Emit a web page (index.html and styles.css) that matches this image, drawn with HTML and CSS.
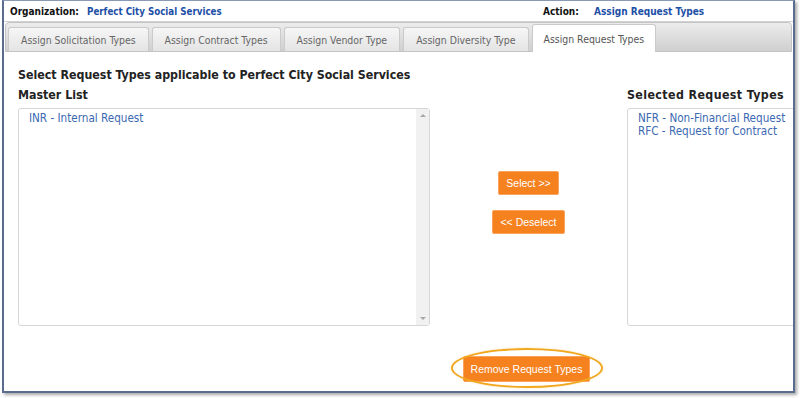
FILE: index.html
```html
<!DOCTYPE html>
<html>
<head>
<meta charset="utf-8">
<link rel="stylesheet" href="styles.css">
</head>
<body>
<div class="frame">
  <header class="topbar">
    <div class="meta org"><span class="label">Organization:</span><span class="value">Perfect City Social Services</span></div>
    <div class="meta action"><span class="label">Action:</span><span class="value">Assign Request Types</span></div>
  </header>
  <nav class="tabs">
    <span class="tab">Assign Solicitation Types</span>
    <span class="tab">Assign Contract Types</span>
    <span class="tab">Assign Vendor Type</span>
    <span class="tab">Assign Diversity Type</span>
    <span class="tab active">Assign Request Types</span>
  </nav>
  <section class="panel">
    <h1 class="title">Select Request Types applicable to Perfect City Social Services</h1>
    <div class="columns">
      <div class="col">
        <h2 class="col-title">Master List</h2>
        <div class="listbox">
          <ul class="items">
            <li>INR - Internal Request</li>
          </ul>
          <div class="scroll"><span class="arrow up"></span><span class="arrow down"></span></div>
        </div>
      </div>
      <div class="actions">
        <button class="btn">Select &gt;&gt;</button>
        <button class="btn">&lt;&lt; Deselect</button>
      </div>
      <div class="col right">
        <h2 class="col-title">Selected Request Types</h2>
        <div class="listbox">
          <ul class="items">
            <li>NFR - Non-Financial Request</li>
            <li>RFC - Request for Contract</li>
          </ul>
        </div>
      </div>
    </div>
    <div class="footer">
      <div class="remove-wrap">
        <button class="btn big">Remove Request Types</button>
        <span class="ring"></span>
      </div>
    </div>
  </section>
</div>
</body>
</html>
```

FILE: styles.css
```css
html, body {
  margin: 0;
  padding: 0;
  background: #ffffff;
  overflow: hidden;
}
body {
  width: 800px;
  height: 398px;
  font-family: "DejaVu Sans Condensed", "DejaVu Sans", sans-serif;
}
.frame {
  box-sizing: border-box;
  margin-left: 2px;
  width: 793px;
  height: 393px;
  border: 2px solid #5b6d8e;
  border-top: 1px solid #8a9ab6;
  box-shadow: 2px 2px 3px rgba(0,0,0,0.35);
  background: #fff;
  overflow: hidden;
}
.topbar {
  height: 20px;
  border-bottom: 1px solid #d2d2d2;
  display: flex;
  align-items: center;
  font-size: 10px;
  font-weight: bold;
}
.meta { display: flex; }
.org { margin-left: 6px; width: 533px; }
.label { color: #111; }
.org .label { width: 77px; }
.action .label { width: 51px; }
.value { color: #1d4fa6; }
.org .value { font-size: 9.7px; }
.tabs {
  margin: 0 1px;
  height: 30px;
  box-sizing: border-box;
  border: 1px solid #c4c4c4;
  border-radius: 4px 4px 0 0;
  background: linear-gradient(#ececec, #cfcfcf);
  display: flex;
  align-items: flex-end;
  gap: 3px;
  padding-left: 2px;
}
.tab {
  box-sizing: border-box;
  height: 24px;
  padding: 0 12px;
  display: flex;
  align-items: center;
  font-size: 10.4px;
  color: #666;
  background: linear-gradient(#f6f6f6, #e4e4e4);
  border: 1px solid #cacaca;
  border-bottom: none;
  border-radius: 3px 3px 0 0;
}
.tab.active {
  height: 28px;
  margin-bottom: -1px;
  background: #fff;
  color: #555;
  padding: 0 11px;
}
.panel {
  padding: 16px 0 0 14px;
}
.title {
  margin: 0;
  font-size: 12.3px;
  line-height: 15px;
  font-weight: bold;
  color: #222;
}
.columns {
  margin-top: 5px;
  display: grid;
  grid-template-columns: 412px 197px 190px;
}
.col-title {
  margin: 0 0 5px;
  font-size: 12.3px;
  line-height: 15px;
  font-weight: bold;
  color: #222;
}
.right .col-title { letter-spacing: 0.4px; }
.listbox {
  box-sizing: border-box;
  height: 218px;
  border: 1px solid #d6d6d6;
  border-radius: 3px;
  display: flex;
}
.items {
  flex: 1;
  list-style: none;
  margin: 0;
  padding: 3px 10px;
  font-size: 11.6px;
  line-height: 13px;
  color: #3b69b2;
}
.scroll {
  width: 13px;
  background: #f1f1f1;
  display: flex;
  flex-direction: column;
  justify-content: space-between;
  align-items: center;
  padding: 5px 0;
}
.arrow {
  width: 0;
  height: 0;
  border-left: 3px solid transparent;
  border-right: 3px solid transparent;
}
.arrow.up { border-bottom: 3px solid #a8a8a8; }
.arrow.down { border-top: 3px solid #a8a8a8; }
.actions {
  display: flex;
  flex-direction: column;
  align-items: center;
  padding-top: 83px;
  gap: 15px;
}
.btn {
  height: 24px;
  padding: 0 7px;
  border: 1px solid #f9a35c;
  border-radius: 2px;
  background: #f5821f;
  color: #fff;
  font-family: "Liberation Sans", Arial, sans-serif;
  font-size: 10.5px;
}
.footer {
  display: grid;
  grid-template-columns: 412px 197px;
  margin-top: 30px;
}
.remove-wrap {
  grid-column: 2;
  justify-self: center;
  position: relative;
  margin-left: -4px;
}
.btn.big {
  height: 26px;
  padding: 0 7px;
  font-size: 10.5px;
}
.ring {
  position: absolute;
  left: -12px;
  top: -8px;
  width: 152px;
  height: 40px;
  box-sizing: border-box;
  border: 2px solid #f1a71e;
  border-radius: 50%;
  box-shadow: 0 0 2px rgba(240,160,30,0.4);
}
```
